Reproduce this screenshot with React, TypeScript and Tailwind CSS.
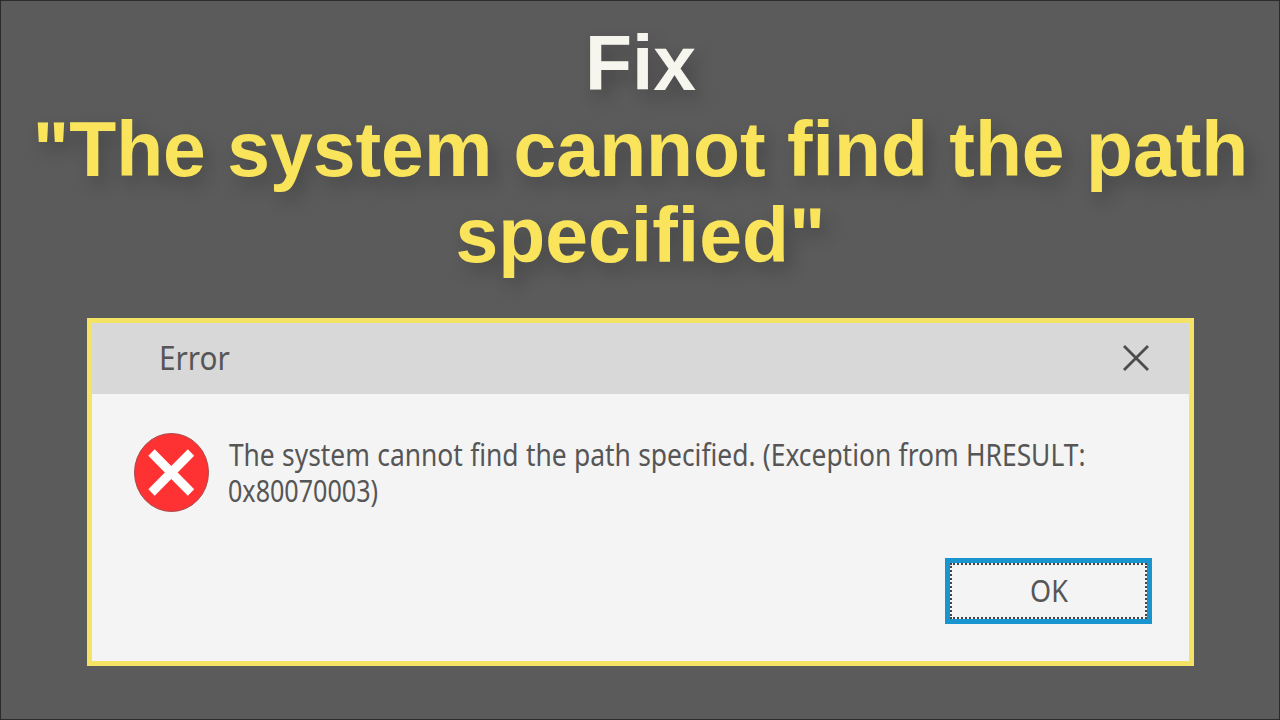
import React from 'react';

function ErrorIcon() {
  return (
    <svg viewBox="0 0 76 80" className="h-20 w-[76px] shrink-0">
      <ellipse cx="37.5" cy="40.5" rx="37" ry="39" fill="#fe3233" stroke="#a8474a" strokeWidth="1" />
      <path d="M17.5 20.5 57 60.5M57 20.5 17.5 60.5" stroke="#fff" strokeWidth="9" />
    </svg>
  );
}

function CloseIcon() {
  return (
    <svg viewBox="0 0 28 28" className="h-7 w-7">
      <path d="M2 2 26 26M26 2 2 26" stroke="#4c4c4c" strokeWidth="2.8" fill="none" />
    </svg>
  );
}

function ErrorDialog() {
  return (
    <div className="ml-[86px] mt-10 flex h-[348px] w-[1107px] flex-col border-[5px] border-[#f5e366] bg-[#f4f4f4] font-['Noto_Sans','Open_Sans',sans-serif] text-[#565656]">
      {/* Title bar */}
      <div className="flex h-[71px] shrink-0 items-center justify-between bg-[#d8d8d8] pb-0.5 pl-[67px] pr-[39px]">
        <span className="origin-left scale-x-[0.93] whitespace-nowrap text-[32px] leading-9">Error</span>
        <CloseIcon />
      </div>

      {/* Message */}
      <div className="flex pl-[42px] pt-[38px]">
        <ErrorIcon />
        <div className="ml-[18px] mt-[5px] whitespace-nowrap text-[30px] leading-9">
          <p className="w-max origin-left scale-x-[0.88] pl-px [word-spacing:0.5px]">
            The system cannot find the path specified. (Exception from HRESULT:
          </p>
          <p className="w-max origin-left scale-x-[0.837]">0x80070003)</p>
        </div>
      </div>

      <div className="mb-[37px] ml-auto mr-[37px] mt-auto h-[66px] w-[207px] border-[5px] border-[#1895cf]">
        <button className="flex h-full w-full items-center justify-center border-2 border-dotted border-[#454545]">
          <span className="scale-x-[0.9] text-[30px] leading-9">OK</span>
        </button>
      </div>
    </div>
  );
}

export default function App() {
  return (
    <main className="h-[720px] w-[1280px] overflow-hidden border border-[#2b2b2b] bg-[#5b5b5b] pt-[19px] [font-variant-ligatures:none]">
      <h1 className="whitespace-nowrap pl-px text-center font-['Liberation_Sans',Arial,sans-serif] text-[76.9px] font-bold leading-[86px] text-[#f9e45c] [text-shadow:6px_9px_18px_rgba(0,0,0,0.24)]">
        <span className="block text-[#f6f6ef]">Fix</span>
        <span className="block">"The system cannot find the path</span>
        <span className="block">specified"</span>
      </h1>
      <ErrorDialog />
    </main>
  );
}
